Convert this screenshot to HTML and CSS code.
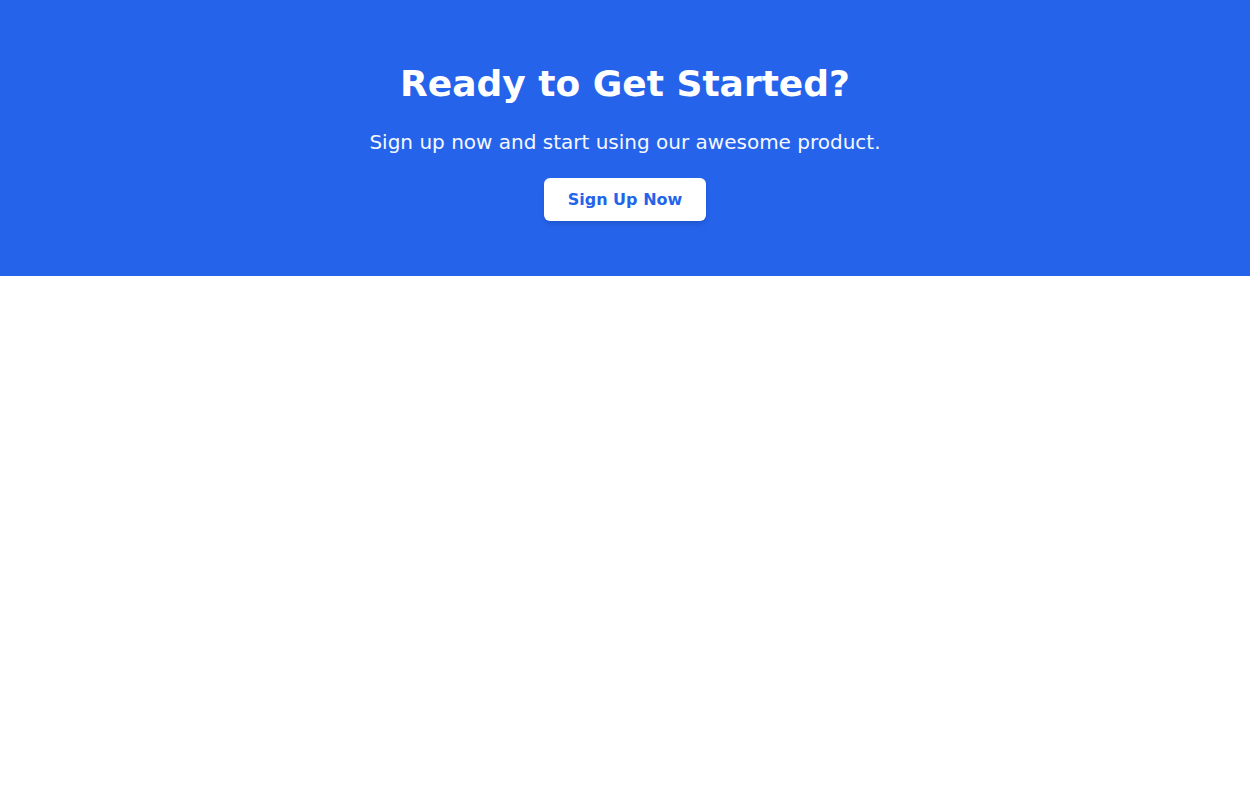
FILE: index.html
```html
<!DOCTYPE html>
<html lang="en">
<head>
  <meta charset="UTF-8" />
  <meta name="viewport" content="width=device-width, initial-scale=1" />
  <title>Get Started</title>
  <link rel="stylesheet" href="styles.css">
</head>
<body>

  <section class="cta">
    <h2 class="cta-title">Ready to Get Started?</h2>
    <p class="cta-text">Sign up now and start using our awesome product.</p>
    <a href="#" class="cta-button">Sign Up Now</a>
  </section>

</body>
</html>
```

FILE: styles.css
```css
:root {
  --brand: #2563eb;
  --text-light: #ffffff;
  --font-main: 'DejaVu Sans', 'Liberation Sans', sans-serif;
}

body {
  margin: 0;
  font-family: var(--font-main);
  background: #ffffff;
}

.cta {
  background-color: var(--brand);
  color: var(--text-light);
  text-align: center;
  padding: 64px 16px 55px;
  display: flex;
  flex-direction: column;
  align-items: center;
}

.cta-title {
  margin: 0;
  font-size: 36px;
  line-height: 40px;
  font-weight: 700;
}

.cta-text {
  margin: 24px 0 0;
  font-size: 20px;
  line-height: 28px;
  color: #f5f8ff;
}

.cta-button {
  margin-top: 22px;
  display: inline-block;
  padding: 12px 24px;
  background: #ffffff;
  color: var(--brand);
  font-size: 16px;
  line-height: 19px;
  font-weight: 700;
  text-decoration: none;
  border-radius: 6px;
  box-shadow: 0 4px 6px -1px rgba(0, 0, 0, 0.1), 0 2px 4px -2px rgba(0, 0, 0, 0.1);
}
```
